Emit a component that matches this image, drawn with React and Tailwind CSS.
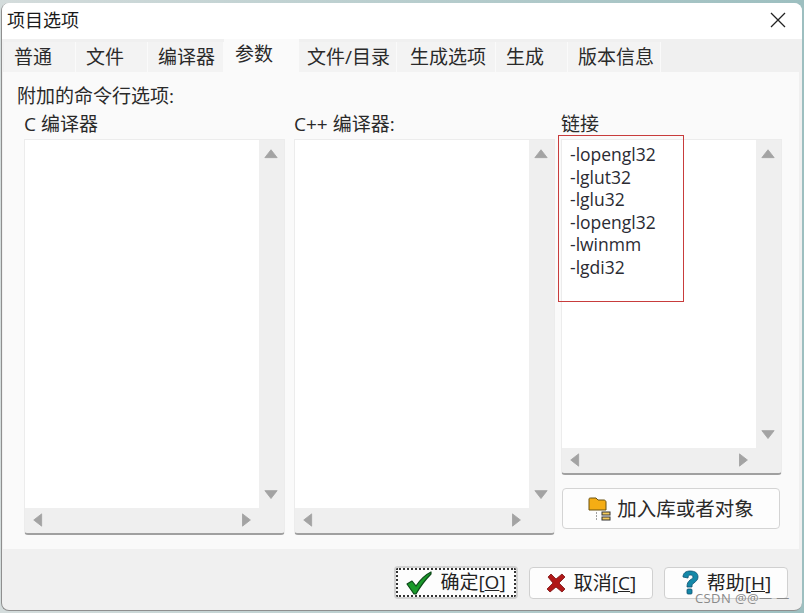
const cjk = "font-['Open_Sans','Noto_Sans_CJK_SC',sans-serif]"

const tabs = [
  { label: "普通", w: "w-[72px] pl-[10px]" },
  { label: "文件", w: "w-[72px] pl-[10px]" },
  { label: "编译器", w: "w-[76px] pl-[10px]" },
  { label: "参数", w: "w-[75px] pl-[11px]", active: true },
  { label: "文件/目录", w: "w-[98px] pl-[8px]" },
  { label: "生成选项", w: "w-[99px] pl-[13px]" },
  { label: "生成", w: "w-[72px] pl-[10px]" },
  { label: "版本信息", w: "w-[93px] pl-[10px]" },
]

const links = ["-lopengl32", "-lglut32", "-lglu32", "-lopengl32", "-lwinmm", "-lgdi32"]

const Tri = ({ dir }) => {
  const pts = {
    up: "1,11 8,2 15,11",
    down: "1,3 15,3 8,12",
    left: "11,1 11,15 2,8",
    right: "4,1 4,15 13,8",
  }
  return (
    <svg width="14" height="14" viewBox="0 0 16 16" className="shrink-0">
      <polygon points={pts[dir]} fill="#a3a3a3" stroke="#a3a3a3" strokeLinejoin="round" />
    </svg>
  )
}

const ListBox = ({ className, children }) => (
  <div className={`flex flex-col bg-[#efefef] border border-[#ececec] border-b-2 border-b-[#a0a0a0] rounded-b-sm ${className}`}>
    <div className="flex flex-1 min-h-0">
      <div className="flex-1 bg-white">{children}</div>
      <div className="w-[25px] flex flex-col items-center justify-between pt-[8px] pb-[6px] pr-[2px]">
        <Tri dir="up" />
        <Tri dir="down" />
      </div>
    </div>
    <div className="h-[25px] flex items-center justify-between pl-[7px] pr-[31px] pb-[1px]">
      <Tri dir="left" />
      <Tri dir="right" />
    </div>
  </div>
)

const CheckIcon = () => (
  <svg width="26" height="24" viewBox="0 0 26 24" className="shrink-0">
    <path d="M1 13 L6 10 L10 15 C14 9 19 4 25 1 L25 3 C19 9 14 16 10 23 L8 23 Z" fill="#1a9a2a" stroke="#0c4a18" strokeWidth="1.2" strokeLinejoin="round" />
  </svg>
)

const CrossIcon = () => (
  <svg width="20" height="20" viewBox="0 0 20 20" className="shrink-0">
    <path d="M2 4 L5 1 L10 6 L16 1 L19 4 L13 10 L19 16 L16 19 L10 14 L4 19 L1 16 L7 10 Z" fill="#b01818" stroke="#7a1010" strokeWidth="0.8" strokeLinejoin="round" />
  </svg>
)

const HelpIcon = () => (
  <svg width="18" height="26" viewBox="0 0 18 26" className="shrink-0">
    <path d="M2 7 C2 3 5 1 9 1 C14 1 17 3 17 7 C17 10 15 11 13 13 C11 14 11 15 11 17 L6 17 C6 13 7 12 9 10 C11 9 12 8 12 7 C12 5 10 5 9 5 C8 5 7 6 7 8 Z" fill="#1488a8" stroke="#0e4f70" strokeWidth="0.8" />
    <rect x="6" y="19" width="5" height="5" rx="1" fill="#1488a8" stroke="#0e4f70" strokeWidth="0.8" />
  </svg>
)

const FolderIcon = () => (
  <svg width="23" height="24" viewBox="0 0 23 24" className="shrink-0">
    <path d="M1 2 C1 1 2 1 3 1 L8 1 L10 3 L16 3 C17 3 18 4 18 5 L18 13 L1 13 Z" fill="#f5ad14" stroke="#6b5210" strokeWidth="1" />
    <path d="M8 16 h2 M8 19 h2 M8 22 h2" stroke="#444" strokeWidth="1" strokeDasharray="1 1" fill="none" />
    <rect x="14" y="15" width="8" height="3" fill="#f4c95a" stroke="#333" strokeWidth="1" />
    <rect x="14" y="20" width="8" height="3" fill="#f4c95a" stroke="#333" strokeWidth="1" />
  </svg>
)

const Btn = ({ icon, label, hot, className }) => (
  <button className={`w-[124px] flex items-center justify-center gap-[8px] bg-[#fdfdfd] rounded border border-[#d0d0d0] text-[19px] text-[#222] ${className}`}>
    {icon}
    <span>
      {label}[<span className="underline">{hot}</span>]
    </span>
  </button>
)

export default function App() {
  return (
    <div className={`relative w-[804px] h-[613px] overflow-hidden bg-gradient-to-r from-[#d4dcdc] to-[#9dbfc0] ${cjk}`}>
      <div className="h-full pt-[3px] pl-[1px] pr-[2px] pb-[2px]">
        <div className="h-full flex flex-col bg-[#f0f0f0] rounded-[8px] overflow-hidden border-l border-b border-[#8f8f8f]">
          {/* title bar */}
          <div className="h-[36px] shrink-0 bg-white flex items-center justify-between pl-[5px] pr-[16px] pb-[2px]">
            <span className="text-[18px] text-[#1a1a1a]">项目选项</span>
            <svg width="16" height="16" viewBox="0 0 16 16">
              <path d="M1 1 L15 15 M15 1 L1 15" stroke="#222" strokeWidth="1.3" />
            </svg>
          </div>

          {/* tabs */}
          <div className="h-[33px] shrink-0 flex items-end pl-[2px]">
            {tabs.map((t) => (
              <div
                key={t.label}
                className={`${t.w} flex text-[19px] text-[#2a2a2a] ${
                  t.active
                    ? "h-[33px] bg-[#fafafa] items-start pt-[1px]"
                    : "h-[30px] bg-[#f3f3f3] border-r border-[#fafafa] items-center"
                }`}
              >
                {t.label}
              </div>
            ))}
          </div>

          {/* panel */}
          <div className="h-[477px] shrink-0 ml-[1px] mr-[3px] bg-[#fafafa] pl-[21px] flex flex-col">
            <div className="-ml-[7px] h-[40px] pt-[12px] text-[19px] leading-[24px] text-[#2a2a2a]">附加的命令行选项:</div>
            <div className="flex flex-1 gap-[9px]">
              <div className="w-[261px] flex flex-col">
                <div className="h-[27px] text-[19px] leading-[24px] text-[#2a2a2a]">C 编译器</div>
                <ListBox className="h-[396px]" />
              </div>
              <div className="w-[261px] flex flex-col">
                <div className="h-[27px] text-[19px] leading-[24px] text-[#2a2a2a]">C++ 编译器:</div>
                <ListBox className="h-[396px]" />
              </div>
              <div className="w-[221px] -ml-[3px] flex flex-col">
                <div className="h-[27px] text-[19px] leading-[24px] text-[#2a2a2a]">链接</div>
                <ListBox className="h-[336px]">
                  <div className="pt-[3px] pl-[8px] text-[17.5px] leading-[22.6px] text-[#2b2b33]">
                    {links.map((l, i) => (
                      <div key={i}>{l}</div>
                    ))}
                  </div>
                </ListBox>
                <button className="mt-[13px] ml-[1px] w-[218px] h-[41px] flex items-center justify-center gap-[6px] bg-[#fdfdfd] rounded border border-[#d4d4d4] text-[19.5px] text-[#2a2a2a]">
                  <FolderIcon />
                  加入库或者对象
                </button>
              </div>
            </div>
          </div>

          {/* footer */}
          <div className="flex-1 flex items-start justify-end gap-[11px] pt-[18px] pr-[14px]">
            <Btn
              icon={<CheckIcon />}
              label="确定"
              hot="O"
              className="h-[33px] -mt-[1px] border-2 border-[#3f8fd0] outline-2 outline-dotted outline-[#333] -outline-offset-4"
            />
            <Btn icon={<CrossIcon />} label="取消" hot="C" className="h-[32px]" />
            <Btn icon={<HelpIcon />} label="帮助" hot="H" className="h-[32px]" />
          </div>
        </div>
      </div>

      {/* annotation box */}
      <div className="absolute left-[558px] top-[135px] w-[126px] h-[167px] border border-[#c83c3c]" />
      {/* watermark */}
      <div className="absolute left-[695px] top-[590px] text-[13px] leading-[16px] tracking-[0.4px] text-[#8a8a8a]">CSDN @@一 一</div>
    </div>
  )
}
